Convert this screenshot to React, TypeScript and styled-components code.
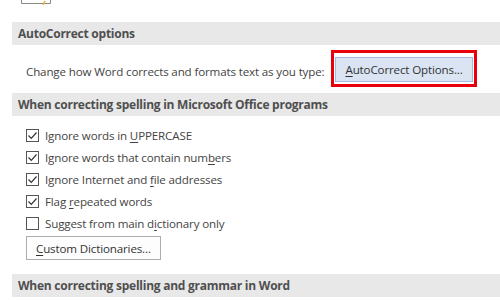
import React from "react";
import styled, { createGlobalStyle } from "styled-components";

const Global = createGlobalStyle`
  html, body { margin: 0; padding: 0; background: #ffffff; }
  body { font-family: "Open Sans", "Noto Sans", Arial, sans-serif; font-size: 11.6px; color: #444444; }
`;

const Page = styled.div`
  width: 500px;
  height: 300px;
  overflow: hidden;
  padding-left: 12px;
  box-sizing: border-box;
  display: flex;
  flex-direction: column;
`;

const TopStrip = styled.div`
  height: 22px;
  padding-left: 9px;
  display: flex;
  align-items: flex-start;
`;

const SectionHeader = styled.div`
  height: 23px;
  background: #e8e8e8;
  display: flex;
  align-items: center;
  padding-left: 6px;
  font-weight: 700;
  font-size: 12px;
  color: #4f4f4f;
  letter-spacing: -0.25px;
`;

const DescRow = styled.div`
  height: 48px;
  display: flex;
  align-items: center;
  padding-left: 14px;
  gap: 11px;
`;

const Desc = styled.span`
  letter-spacing: -0.15px;
  margin-top: 4px;
`;

const Highlight = styled.div`
  position: relative;
`;

const RedFrame = styled.div`
  position: absolute;
  left: -4px;
  top: -7px;
  right: -4px;
  bottom: -5px;
  border: 3px solid #e8000b;
  pointer-events: none;
`;

const Button = styled.button<{ $primary?: boolean }>`
  height: ${(p) => (p.$primary ? "25px" : "24px")};
  padding: 0 9px;
  font-family: "Open Sans", "Noto Sans", Arial, sans-serif;
  font-size: 11.6px;
  letter-spacing: -0.15px;
  color: #333333;
  background: ${(p) => (p.$primary ? "#dae4f3" : "#fdfdfd")};
  border: 1px solid ${(p) => (p.$primary ? "#a4bbdf" : "#adadad")};
  display: flex;
  align-items: center;
  box-sizing: border-box;
  cursor: default;
`;

const OptionList = styled.div`
  padding: 8px 0 0 14px;
  display: flex;
  flex-direction: column;
`;

const OptionRow = styled.label`
  height: 22px;
  display: flex;
  align-items: center;
  gap: 6px;
  letter-spacing: -0.15px;
`;

const Box = styled.span`
  width: 13px;
  height: 13px;
  box-sizing: border-box;
  border: 1px solid #555555;
  background: #ffffff;
  display: flex;
  align-items: center;
  justify-content: center;
  flex: none;
`;

const U = styled.span`
  text-decoration: underline;
  text-underline-offset: 2px;
`;

const ButtonRow = styled.div`
  padding: 2px 0 14px 0;
  display: flex;
`;

const Check = () => (
  <svg width="11" height="11" viewBox="0 0 11 11">
    <path d="M1.5 5.5 L4.3 8.3 L9.5 2.5" fill="none" stroke="#333" strokeWidth="1.2" />
  </svg>
);

const Option: React.FC<{ checked?: boolean; children: React.ReactNode }> = ({ checked, children }) => (
  <OptionRow>
    <Box>{checked && <Check />}</Box>
    <span>{children}</span>
  </OptionRow>
);

export default function App() {
  return (
    <>
      <Global />
      <Page>
        <TopStrip>
          <svg width="31" height="5" viewBox="0 0 31 5">
            <path d="M0.5 0 V3.5 H29.5 V0" fill="none" stroke="#8a8a8a" strokeWidth="1" />
            <path d="M22 5 L24 1" stroke="#f0b030" strokeWidth="1.5" />
          </svg>
        </TopStrip>
        <SectionHeader>AutoCorrect options</SectionHeader>
        <DescRow>
          <Desc>Change how Word corrects and formats text as you type:</Desc>
          <Highlight>
            <Button $primary>
              <U>A</U>utoCorrect Options...
            </Button>
            <RedFrame />
          </Highlight>
        </DescRow>
        <SectionHeader>When correcting spelling in Microsoft Office programs</SectionHeader>
        <OptionList>
          <Option checked>
            Ignore words in <U>U</U>PPERCASE
          </Option>
          <Option checked>
            Ignore words that contain num<U>b</U>ers
          </Option>
          <Option checked>
            Ignore Internet and <U>f</U>ile addresses
          </Option>
          <Option checked>
            Flag <U>r</U>epeated words
          </Option>
          <Option>
            Suggest from main d<U>i</U>ctionary only
          </Option>
          <ButtonRow>
            <Button>
              <U>C</U>ustom Dictionaries...
            </Button>
          </ButtonRow>
        </OptionList>
        <SectionHeader>When correcting spelling and grammar in Word</SectionHeader>
      </Page>
    </>
  );
}
